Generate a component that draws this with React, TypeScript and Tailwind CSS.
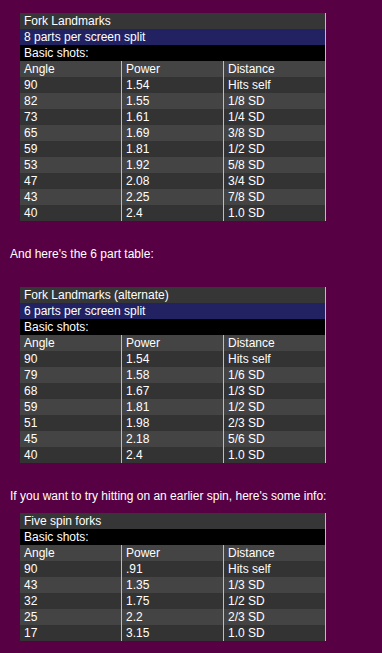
type Row = [string, string, string]

interface ForkTable {
  title: string
  subtitle?: string
  rows: Row[]
}

const eightPart: ForkTable = {
  title: 'Fork Landmarks',
  subtitle: '8 parts per screen split',
  rows: [
    ['90', '1.54', 'Hits self'],
    ['82', '1.55', '1/8 SD'],
    ['73', '1.61', '1/4 SD'],
    ['65', '1.69', '3/8 SD'],
    ['59', '1.81', '1/2 SD'],
    ['53', '1.92', '5/8 SD'],
    ['47', '2.08', '3/4 SD'],
    ['43', '2.25', '7/8 SD'],
    ['40', '2.4', '1.0 SD'],
  ],
}

const sixPart: ForkTable = {
  title: 'Fork Landmarks (alternate)',
  subtitle: '6 parts per screen split',
  rows: [
    ['90', '1.54', 'Hits self'],
    ['79', '1.58', '1/6 SD'],
    ['68', '1.67', '1/3 SD'],
    ['59', '1.81', '1/2 SD'],
    ['51', '1.98', '2/3 SD'],
    ['45', '2.18', '5/6 SD'],
    ['40', '2.4', '1.0 SD'],
  ],
}

const fiveSpin: ForkTable = {
  title: 'Five spin forks',
  rows: [
    ['90', '.91', 'Hits self'],
    ['43', '1.35', '1/3 SD'],
    ['32', '1.75', '1/2 SD'],
    ['25', '2.2', '2/3 SD'],
    ['17', '3.15', '1.0 SD'],
  ],
}

function DataRow({ cells, bg }: { cells: Row; bg: string }) {
  return (
    <div className={`grid grid-cols-3 h-4 ${bg}`}>
      {cells.map((c, i) => (
        <div key={i} className="pl-1 border-r border-[#bcbcbc] leading-4">
          {c}
        </div>
      ))}
    </div>
  )
}

function LandmarkTable({ table }: { table: ForkTable }) {
  return (
    <div className="ml-[20px] w-[306px]">
      <div className="h-4 pl-1 leading-4 bg-[#363636] border-r border-[#bcbcbc]">{table.title}</div>
      {table.subtitle && (
        <div className="h-4 pl-1 leading-4 bg-[#222262] border-r border-[#bcbcbc]">{table.subtitle}</div>
      )}
      <div className="h-4 pl-1 leading-4 bg-black border-r border-[#bcbcbc]">Basic shots:</div>
      <DataRow cells={['Angle', 'Power', 'Distance']} bg="bg-[#444444]" />
      {table.rows.map((r, i) => (
        <DataRow key={i} cells={r} bg={i % 2 === 0 ? 'bg-[#333333]' : 'bg-[#444444]'} />
      ))}
    </div>
  )
}

export default function App() {
  return (
    <div
      className="min-h-screen bg-[#580044] text-white text-[12px] pt-[13px] pb-4"
      style={{ fontFamily: '"Liberation Sans", Arial, sans-serif' }}
    >
      <LandmarkTable table={eightPart} />
      <p className="ml-[10px] mt-[25px] leading-4">And here's the 6 part table:</p>
      <div className="mt-[25px]">
        <LandmarkTable table={sixPart} />
      </div>
      <p className="ml-[10px] mt-[25px] leading-4">If you want to try hitting on an earlier spin, here's some info:</p>
      <div className="mt-[9px]">
        <LandmarkTable table={fiveSpin} />
      </div>
    </div>
  )
}
